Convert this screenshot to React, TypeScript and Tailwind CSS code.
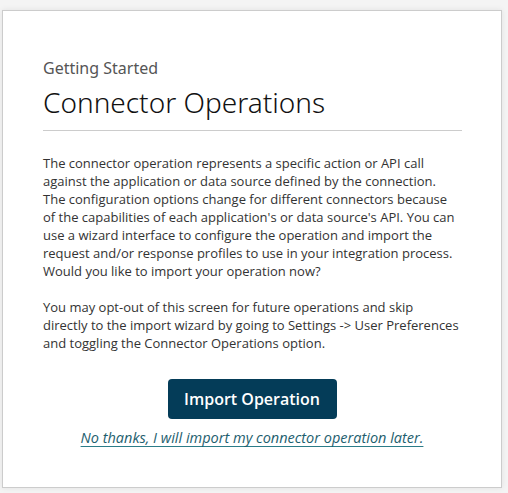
import React from "react";

export default function App() {
  return (
    <div className="min-h-[493px] w-full bg-[#f4f4f4] pl-[2px] pr-[6px] pt-[10px] pb-[5px]">
      <div
        className="flex h-[478px] flex-col border border-[#cccccc] bg-white px-10 pt-[47px] shadow-[0_0_6px_rgba(0,0,0,0.08)]"
        style={{ fontFamily: '"Open Sans", sans-serif' }}
      >
        <div className="text-[16px] leading-[20px] text-[#555555]" style={{ fontFamily: '"Noto Sans", sans-serif' }}>
          Getting Started
        </div>
        <h1
          className="mt-[5px] text-[28px] font-light leading-[38px] text-[#111111]"
          style={{ fontFamily: '"Noto Sans", sans-serif' }}
        >
          Connector Operations
        </h1>
        <div className="mt-[9px] mr-[-1px] border-t border-[#cccccc]" />
        <div className="mt-[23px] text-[13px] leading-[18px] text-[#333333]">
          <p>
            The connector operation represents a specific action or API call against the application or data source
            defined by the connection. The configuration options change for different connectors because of the
            capabilities of each application's or data source's API. You can use a wizard interface to configure the
            operation and import the request and/or response profiles to use in your integration process. Would you
            like to import your operation now?
          </p>
          <p className="mt-[18px]">
            You may opt-out of this screen for future operations and skip directly to the import wizard by going to
            Settings -&gt; User Preferences and toggling the Connector Operations option.
          </p>
        </div>
        <div className="mt-[27px] flex flex-col items-center">
          <button className="h-10 w-[169px] rounded bg-[#043c58] text-[16px] font-semibold text-white">
            Import Operation
          </button>
          <a
            href="#"
            className="mt-[8px] text-[14.5px] font-medium italic text-[#1d5e6e] underline decoration-[#2b7c88] underline-offset-[3px]"
          >
            No thanks, I will import my connector operation later.
          </a>
        </div>
      </div>
    </div>
  );
}
